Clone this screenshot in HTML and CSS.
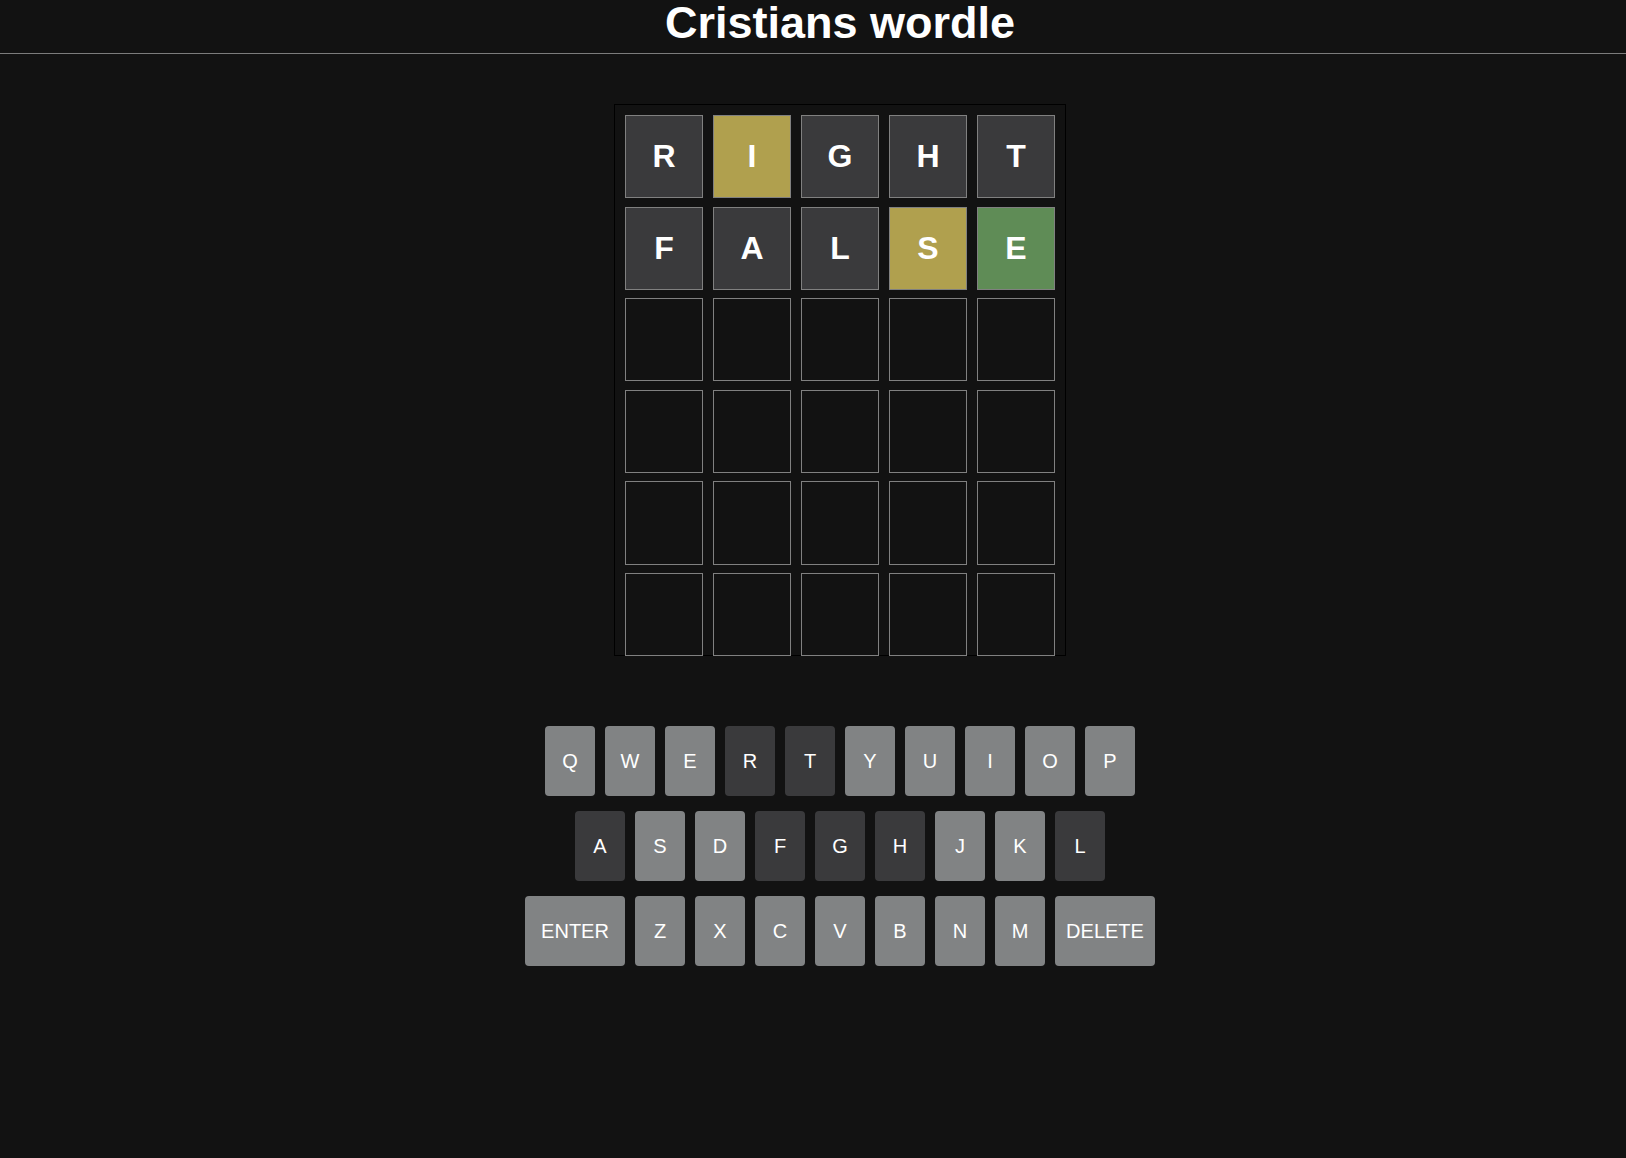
FILE: index.html
```html
<!DOCTYPE html>
<html lang="en">
<head>
<meta charset="utf-8">
<title>Cristians wordle</title>
<link rel="stylesheet" href="styles.css">
</head>
<body>
<header class="header"><h1 class="title">Cristians wordle</h1></header>
<main class="game">
  <div class="board">
    <div class="tile absent">R</div><div class="tile present">I</div><div class="tile absent">G</div><div class="tile absent">H</div><div class="tile absent">T</div>
    <div class="tile absent">F</div><div class="tile absent">A</div><div class="tile absent">L</div><div class="tile present">S</div><div class="tile correct">E</div>
    <div class="tile"></div><div class="tile"></div><div class="tile"></div><div class="tile"></div><div class="tile"></div>
    <div class="tile"></div><div class="tile"></div><div class="tile"></div><div class="tile"></div><div class="tile"></div>
    <div class="tile"></div><div class="tile"></div><div class="tile"></div><div class="tile"></div><div class="tile"></div>
    <div class="tile"></div><div class="tile"></div><div class="tile"></div><div class="tile"></div><div class="tile"></div>
  </div>
  <div class="keyboard">
    <div class="key-row">
      <button class="key">Q</button><button class="key">W</button><button class="key">E</button><button class="key used">R</button><button class="key used">T</button><button class="key">Y</button><button class="key">U</button><button class="key">I</button><button class="key">O</button><button class="key">P</button>
    </div>
    <div class="key-row">
      <button class="key used">A</button><button class="key">S</button><button class="key">D</button><button class="key used">F</button><button class="key used">G</button><button class="key used">H</button><button class="key">J</button><button class="key">K</button><button class="key used">L</button>
    </div>
    <div class="key-row">
      <button class="key wide">ENTER</button><button class="key">Z</button><button class="key">X</button><button class="key">C</button><button class="key">V</button><button class="key">B</button><button class="key">N</button><button class="key">M</button><button class="key wide">DELETE</button>
    </div>
  </div>
</main>
</body>
</html>
```
FILE: styles.css
```css
html, body {
  margin: 0;
  background: #121212;
  color: #ffffff;
  font-family: "Liberation Sans", Arial, Helvetica, sans-serif;
}

.header {
  border-bottom: 1px solid #7c7c7c;
  padding: 0 0 8px 54px;
}

.title {
  margin: 0;
  font-size: 45px;
  line-height: 45px;
  font-weight: 700;
  text-align: center;
}

.game {
  padding: 50px 0 0 54px;
  display: flex;
  flex-direction: column;
  align-items: center;
}

.board {
  box-sizing: border-box;
  height: 552px;
  border: 1px solid #000000;
  padding: 10px 10px 0;
  display: grid;
  grid-template-columns: repeat(5, 77.4px);
  grid-auto-rows: 83.3px;
  column-gap: 10.6px;
  row-gap: 8.3px;
}

.tile {
  box-sizing: border-box;
  border: 1px solid #808080;
  display: flex;
  align-items: center;
  justify-content: center;
  font-size: 32px;
  font-weight: 700;
  color: #ffffff;
}

.tile.absent { background: #3a3a3c; }
.tile.present { background: #b0a04e; }
.tile.correct { background: #5f8c56; }

.keyboard {
  margin-top: 70px;
  display: flex;
  flex-direction: column;
  align-items: center;
  gap: 15px;
}

.key-row {
  display: flex;
  gap: 10px;
}

.key {
  width: 50px;
  height: 70px;
  padding: 0;
  border: none;
  border-radius: 4px;
  background: #818384;
  color: #ffffff;
  font-family: "Liberation Sans", Arial, Helvetica, sans-serif;
  font-size: 20px;
  display: flex;
  align-items: center;
  justify-content: center;
}

.key.used { background: #3a3a3c; }
.key.wide { width: 100px; }
```
